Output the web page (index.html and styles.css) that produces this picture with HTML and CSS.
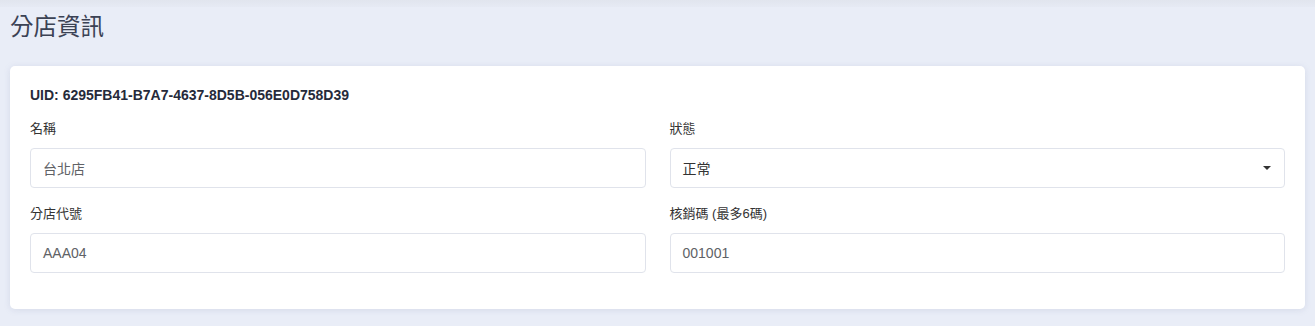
FILE: index.html
```html
<!DOCTYPE html>
<html lang="zh-Hant">

<head>
  <meta charset="UTF-8" />
  <meta name="viewport" content="width=device-width, initial-scale=1.0" />
  <title>分店資訊</title>
  <link rel="stylesheet" href="styles.css">
</head>

<body>
  <div class="top-shadow"></div>

  <h1 class="page-title">分店資訊</h1>

  <div class="card">
    <div class="uid">UID: 6295FB41-B7A7-4637-8D5B-056E0D758D39</div>

    <div class="form-grid">
      <div class="form-item">
        <label class="form-label">名稱</label>
        <div class="form-input">台北店</div>
      </div>

      <div class="form-item">
        <label class="form-label">狀態</label>
        <div class="form-input select">
          <span>正常</span>
          <span class="caret"></span>
        </div>
      </div>

      <div class="form-item">
        <label class="form-label">分店代號</label>
        <div class="form-input">AAA04</div>
      </div>

      <div class="form-item">
        <label class="form-label">核銷碼 (最多6碼)</label>
        <div class="form-input">001001</div>
      </div>
    </div>
  </div>
</body>

</html>
```

FILE: styles.css
```css
html,
body {
  margin: 0;
  padding: 0;
}

body {
  background-color: #e9edf7;
  font-family: "Liberation Sans", "Noto Sans CJK TC", sans-serif;
  min-height: 326px;
}

.top-shadow {
  height: 7px;
  background: linear-gradient(#e1e5ee, #e6eaf4);
}

.page-title {
  margin: 0;
  padding: 0 10px;
  height: 40px;
  line-height: 40px;
  font-size: 23.5px;
  font-weight: 400;
  color: #3b4254;
}

.card {
  margin: 19px 10px 0 10px;
  padding: 20px;
  background-color: white;
  border-radius: 5px;
  box-shadow: 0 1px 6px rgba(120, 135, 170, 0.18);
  height: 203px;
}

.uid {
  font-size: 14px;
  font-weight: 700;
  color: #262a3a;
  line-height: 18px;
}

.form-grid {
  display: grid;
  grid-template-columns: 1fr 1fr;
  column-gap: 24px;
  row-gap: 16px;
  margin-top: 15px;
}

.form-item {
  display: flex;
  flex-direction: column;
}

.form-label {
  font-size: 13px;
  line-height: 20px;
  color: #333;
  margin-bottom: 9px;
}

.form-input {
  box-sizing: border-box;
  height: 40px;
  border: 1px solid #e0e3eb;
  border-radius: 4px;
  padding: 0 12px;
  display: flex;
  align-items: center;
  font-size: 14px;
  color: #606266;
}

.select {
  justify-content: space-between;
  color: #333;
}

.caret {
  width: 0;
  height: 0;
  border-left: 4px solid transparent;
  border-right: 4px solid transparent;
  border-top: 4px solid #333;
  margin-right: 1px;
}
```
